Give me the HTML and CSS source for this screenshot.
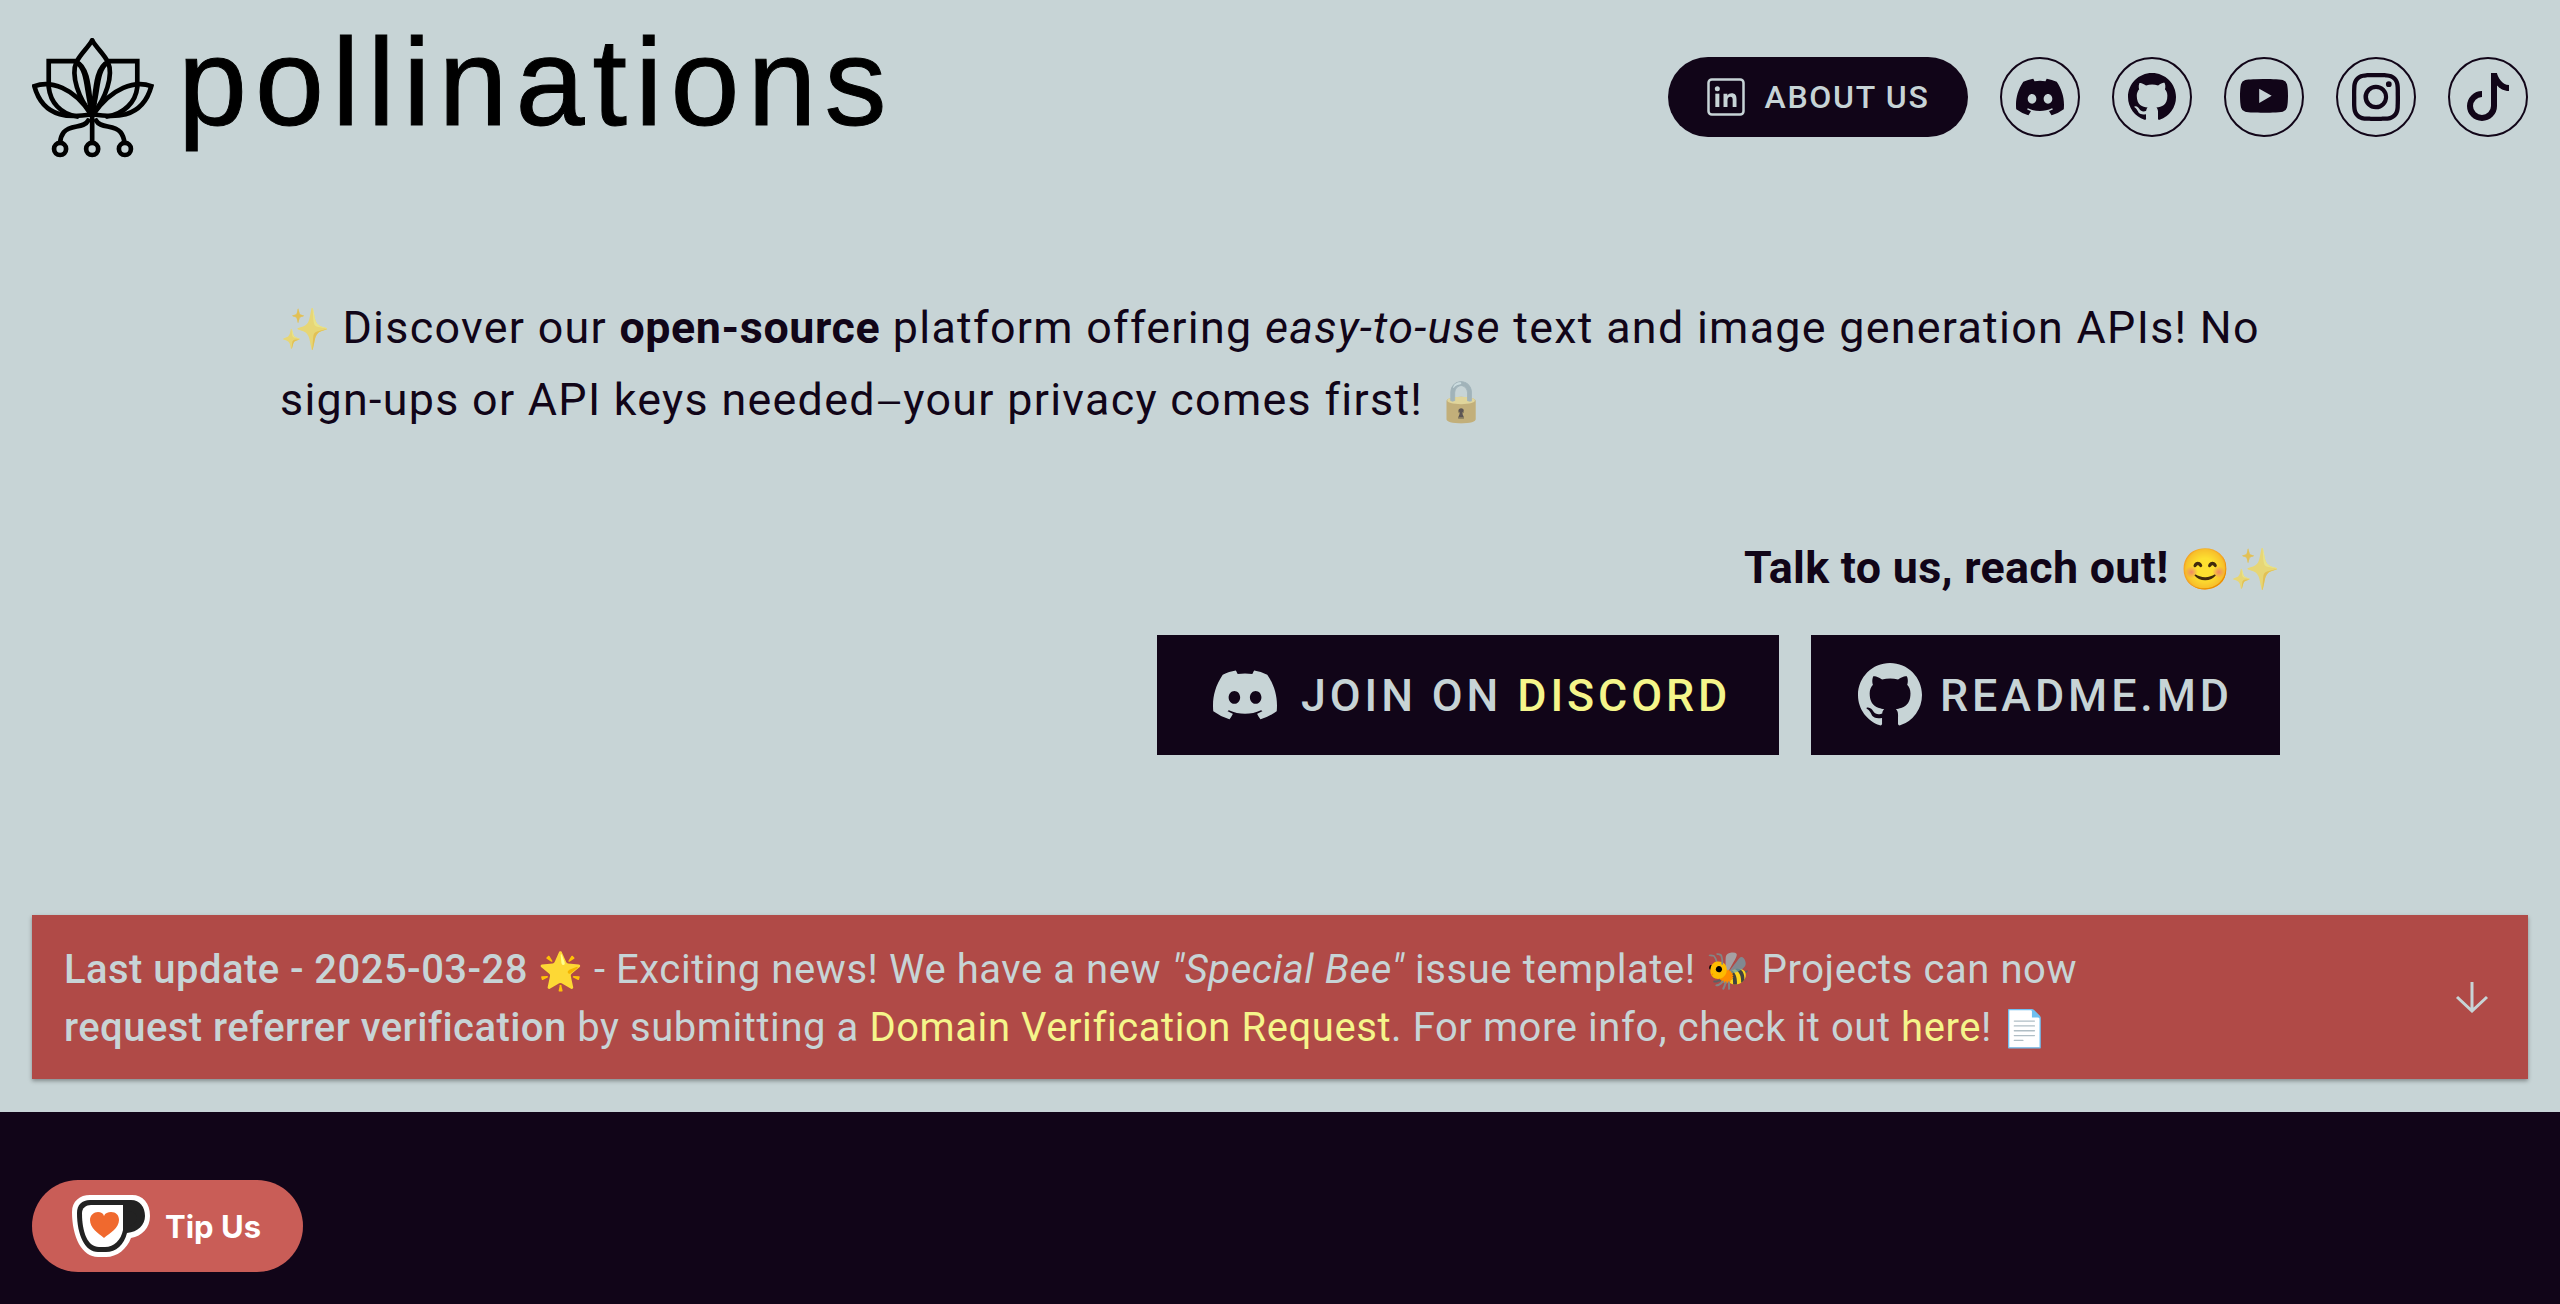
FILE: index.html
```html
<!DOCTYPE html>
<html lang="en">
<head>
<meta charset="utf-8">
<title>Pollinations</title>
<link rel="stylesheet" href="styles.css">
</head>
<body>
<svg class="defs" width="0" height="0" aria-hidden="true">
  <symbol id="i-discord" viewBox="0 0 16 16"><path d="M13.545 2.907a13.2 13.2 0 0 0-3.257-1.011.05.05 0 0 0-.052.025c-.141.25-.297.577-.406.833a12.2 12.2 0 0 0-3.658 0 8 8 0 0 0-.412-.833.05.05 0 0 0-.052-.025c-1.125.194-2.22.534-3.257 1.011a.04.04 0 0 0-.021.018C.356 6.024-.213 9.047.066 12.032q.003.022.021.037a13.3 13.3 0 0 0 3.995 2.02.05.05 0 0 0 .056-.019q.463-.63.818-1.329a.05.05 0 0 0-.01-.059l-.018-.011a9 9 0 0 1-1.248-.595.05.05 0 0 1-.02-.066l.015-.019q.127-.095.248-.195a.05.05 0 0 1 .051-.007c2.619 1.196 5.454 1.196 8.041 0a.05.05 0 0 1 .053.007q.121.1.248.195a.05.05 0 0 1-.004.085 8 8 0 0 1-1.249.594.05.05 0 0 0-.03.03.05.05 0 0 0 .003.041c.24.465.515.909.817 1.329a.05.05 0 0 0 .056.019 13.2 13.2 0 0 0 4.001-2.02.05.05 0 0 0 .021-.037c.334-3.451-.559-6.449-2.366-9.106a.03.03 0 0 0-.02-.019m-8.198 7.307c-.789 0-1.438-.724-1.438-1.612s.637-1.613 1.438-1.613c.807 0 1.45.73 1.438 1.613 0 .888-.637 1.612-1.438 1.612m5.316 0c-.788 0-1.438-.724-1.438-1.612s.637-1.613 1.438-1.613c.807 0 1.451.73 1.438 1.613 0 .888-.631 1.612-1.438 1.612"/></symbol>
  <symbol id="i-github" viewBox="0 0 16 16"><path d="M8 0C3.58 0 0 3.58 0 8c0 3.54 2.29 6.53 5.47 7.59.4.07.55-.17.55-.38 0-.19-.01-.82-.01-1.49-2.01.37-2.53-.49-2.69-.94-.09-.23-.48-.94-.82-1.13-.28-.15-.68-.52-.01-.53.63-.01 1.08.58 1.23.82.72 1.21 1.87.87 2.33.66.07-.52.28-.87.51-1.07-1.78-.2-3.64-.89-3.64-3.95 0-.87.31-1.59.82-2.15-.08-.2-.36-1.02.08-2.12 0 0 .67-.21 2.2.82.64-.18 1.32-.27 2-.27s1.36.09 2 .27c1.53-1.04 2.2-.82 2.2-.82.44 1.1.16 1.92.08 2.12.51.56.82 1.27.82 2.15 0 3.07-1.87 3.75-3.65 3.95.29.25.54.73.54 1.48 0 1.07-.01 1.93-.01 2.2 0 .21.15.46.55.38A8.01 8.01 0 0 0 16 8c0-4.42-3.58-8-8-8"/></symbol>
  <symbol id="i-youtube" viewBox="0 0 16 16"><path d="M8.051 1.999h.089c.822.003 4.987.033 6.11.335a2.01 2.01 0 0 1 1.415 1.42c.101.38.172.883.22 1.402l.01.104.022.26.008.104c.065.914.073 1.77.074 1.957v.075c-.001.194-.01 1.108-.082 2.06l-.008.105-.009.104c-.05.572-.124 1.14-.235 1.558a2.01 2.01 0 0 1-1.415 1.42c-1.16.312-5.569.334-6.18.335h-.142c-.309 0-1.587-.006-2.927-.052l-.17-.006-.087-.004-.171-.007-.171-.007c-1.11-.049-2.167-.128-2.654-.26a2.01 2.01 0 0 1-1.415-1.419c-.111-.417-.185-.986-.235-1.558L.09 9.82l-.008-.104A31 31 0 0 1 0 7.68v-.123c.002-.215.01-.958.064-1.778l.007-.103.003-.052.008-.104.022-.26.01-.104c.048-.519.119-1.023.22-1.402a2.01 2.01 0 0 1 1.415-1.42c.487-.13 1.544-.21 2.654-.26l.17-.007.172-.006.086-.003.171-.007A100 100 0 0 1 7.858 2zM6.4 5.209v4.818l4.157-2.408z"/></symbol>
  <symbol id="i-instagram" viewBox="0 0 16 16"><path d="M8 0C5.829 0 5.556.01 4.703.048 3.85.088 3.269.222 2.76.42a3.9 3.9 0 0 0-1.417.923A3.9 3.9 0 0 0 .42 2.76C.222 3.268.087 3.85.048 4.7.01 5.555 0 5.827 0 8.001c0 2.172.01 2.444.048 3.297.04.852.174 1.433.372 1.942.205.526.478.972.923 1.417.444.445.89.719 1.416.923.51.198 1.09.333 1.942.372C5.555 15.99 5.827 16 8 16s2.444-.01 3.298-.048c.851-.04 1.434-.174 1.943-.372a3.9 3.9 0 0 0 1.416-.923c.445-.445.718-.891.923-1.417.197-.509.332-1.09.372-1.942C15.99 10.445 16 10.173 16 8s-.01-2.445-.048-3.299c-.04-.851-.175-1.433-.372-1.941a3.9 3.9 0 0 0-.923-1.417A3.9 3.9 0 0 0 13.24.42c-.51-.198-1.092-.333-1.943-.372C10.443.01 10.172 0 7.998 0zm-.717 1.442h.718c2.136 0 2.389.007 3.232.046.78.035 1.204.166 1.486.275.373.145.64.319.92.599s.453.546.598.92c.11.281.24.705.275 1.485.039.843.047 1.096.047 3.231s-.008 2.389-.047 3.232c-.035.78-.166 1.203-.275 1.485a2.5 2.5 0 0 1-.599.919c-.28.28-.546.453-.92.598-.28.11-.704.24-1.485.276-.843.038-1.096.047-3.232.047s-2.39-.009-3.233-.047c-.78-.036-1.203-.166-1.485-.276a2.5 2.5 0 0 1-.92-.598 2.5 2.5 0 0 1-.6-.92c-.109-.281-.24-.705-.275-1.485-.038-.843-.046-1.096-.046-3.233s.008-2.388.046-3.231c.036-.78.166-1.204.276-1.486.145-.373.319-.64.599-.92s.546-.453.92-.598c.282-.11.705-.24 1.485-.276.738-.034 1.024-.044 2.515-.045zm4.988 1.328a.96.96 0 1 0 0 1.92.96.96 0 0 0 0-1.92m-4.27 1.122a4.109 4.109 0 1 0 0 8.217 4.109 4.109 0 0 0 0-8.217m0 1.441a2.667 2.667 0 1 1 0 5.334 2.667 2.667 0 0 1 0-5.334"/></symbol>
  <symbol id="i-tiktok" viewBox="0 0 16 16"><path d="M9 0h1.98c.144.715.54 1.617 1.235 2.512C12.895 3.389 13.797 4 15 4v2c-1.753 0-3.07-.814-4-1.829V11a5 5 0 1 1-5-5v2a3 3 0 1 0 3 3z"/></symbol>
</svg>

<header class="top">
  <a class="brand">
    <svg class="lotus" viewBox="35 50 365 365" fill="none" stroke="#000" stroke-width="14" stroke-linejoin="miter" stroke-linecap="round">
      <path d="M215 60C200 85 180 100 168 125C150 165 175 235 213 280"/>
      <path d="M215 60C230 85 250 100 262 125C280 165 255 235 217 280"/>
      <path d="M213 270C205 215 205 140 168 125M217 270C225 215 225 140 262 125" />
      <path d="M213 280C235 220 225 150 262 125M217 280C195 220 205 150 168 125" />
      <path d="M165 122H85V200C90 245 120 280 170 288M265 122H350V200C345 245 310 280 260 288"/>
      <path d="M42 197C90 180 160 200 212 282C160 290 70 300 42 197Z"/>
      <path d="M392 197C344 180 274 200 218 282C274 290 364 300 392 197Z"/>
      <path d="M215 285V366"/>
      <path d="M203 300C190 325 150 310 130 335C122 345 120 355 119 366"/>
      <path d="M227 300C240 325 280 310 300 335C308 345 310 355 312 366"/>
      <circle cx="119" cy="385" r="18"/><circle cx="215" cy="385" r="18"/><circle cx="313" cy="385" r="18"/>
      <path d="M205 250H225L215 295Z" fill="#000" stroke-width="6"/>
    </svg>
    <span class="wordmark">pollinations</span>
  </a>
  <nav class="social">
    <a class="about">
      <svg class="in" viewBox="0 0 24 24" fill="none"><rect x="1.5" y="1.5" width="21" height="21" rx="2" stroke="currentColor" stroke-width="1.5"/><rect x="5.6" y="10" width="2.4" height="8" fill="currentColor"/><circle cx="6.8" cy="7" r="1.5" fill="currentColor"/><path d="M10.5 18v-8h2.3v1.2c.6-1 1.6-1.4 2.6-1.4 2 0 2.9 1.3 2.9 3.4V18H16v-4.3c0-1.2-.4-1.9-1.4-1.9-1.1 0-1.7.8-1.7 2V18z" fill="currentColor"/></svg>
      <span>ABOUT US</span>
    </a>
    <a class="round"><svg><use href="#i-discord"/></svg></a>
    <a class="round"><svg><use href="#i-github"/></svg></a>
    <a class="round"><svg><use href="#i-youtube"/></svg></a>
    <a class="round"><svg><use href="#i-instagram"/></svg></a>
    <a class="round"><svg><use href="#i-tiktok"/></svg></a>
  </nav>
</header>

<main class="content">
  <p class="intro"><span class="emo pale">✨</span> Discover our <strong>open-source</strong> platform offering <em>easy-to-use</em> text and image generation APIs! No sign-ups or API keys needed<span class="dash">—</span>your privacy comes first! <span class="emo muted">🔒</span></p>
  <div class="reach">
    <p class="reach-title">Talk to us, reach out! <span class="emo">😊</span><span class="emo pale">✨</span></p>
    <div class="reach-buttons">
      <a class="cta cta-d"><svg class="cta-icon"><use href="#i-discord"/></svg><span>JOIN ON <b>DISCORD</b></span></a>
      <a class="cta cta-g"><svg class="cta-icon"><use href="#i-github"/></svg><span>README.MD</span></a>
    </div>
  </div>
</main>

<section class="notice">
  <p><strong>Last update - 2025-03-28</strong> <span class="emo">🌟</span> - Exciting news! We have a new <em>"Special Bee"</em> issue template! <span class="emo">🐝</span> Projects can now<br>
  <strong>request referrer verification</strong> by submitting a <a>Domain Verification Request</a>. For more info, check it out <a>here</a>! <span class="emo">📄</span></p>
  <svg class="arrow" viewBox="0 0 34 31" fill="none" stroke="currentColor" stroke-width="3"><path d="M17 0V29M2 15L17 29L32 15"/></svg>
</section>

<footer class="foot">
  <a class="tip">
    <svg class="cup" viewBox="0 0 78 62">
      <path d="M0 17C0 6 8 0 18 0H60C71 0 78 8 78 21C78 33 70 41 59 43C55 54 45 62 34 62H26C10 62 0 42 0 17Z" fill="#fff"/>
      <path d="M5 18C5 10 10 5 18 5H59C68 5 73 12 73 21C73 30 66 37 55 38C52 50 44 57 34 57H26C13 57 5 40 5 18Z" fill="#222"/>
      <path d="M10 18C10 13 14 10 19 10H51V35C49 45 42 52 33 52H27C16 52 10 38 10 18Z" fill="#fff"/>
      <path d="M54 16C61 16 65 19 65 23C65 27 61 31 54 31Z" fill="#222"/>
      <path d="M32 43C26 38 18 33 18 25C18 20 22 17 26 17C29 17 31 18 32 21C33 18 36 17 39 17C44 17 47 20 47 25C47 33 38 38 32 43Z" fill="#f0692e"/>
    </svg>
    <span>Tip Us</span>
  </a>
</footer>
</body>
</html>
```
FILE: styles.css
```css
* { box-sizing: border-box; }
html, body { margin: 0; padding: 0; }
body {
  background: #c7d4d6;
  color: #110518;
  font-family: "Roboto", "Noto Sans", sans-serif;
  height: 1304px;
  overflow: hidden;
  display: flex;
  flex-direction: column;
}
.defs { position: absolute; }
.emo { font-size: .9em; letter-spacing: 0; line-height: 0; }
.pale { opacity: .6; }
.muted { filter: saturate(.45); opacity: .8; }
.dash { font-size: .75em; line-height: 0; }
.top {
  height: 160px;
  display: flex;
  justify-content: space-between;
  align-items: flex-start;
  padding: 0 32px;
}
.brand { display: flex; align-items: flex-start; color: #000; }
.lotus { width: 122px; height: 122px; margin-top: 37px; flex: none; }
.wordmark {
  font-family: "Liberation Sans", sans-serif;
  font-size: 124px;
  line-height: 142px;
  letter-spacing: 8px;
  margin-left: 24px;
  margin-top: 11px;
  -webkit-text-stroke: 1px #000;
}
.social { display: flex; gap: 32px; margin-top: 57px; }
.about {
  width: 300px;
  height: 80px;
  border-radius: 40px;
  background: #110518;
  color: #c7d4d6;
  display: flex;
  align-items: center;
  justify-content: center;
  gap: 18px;
  font-size: 32px;
  font-weight: 500;
  letter-spacing: 1.7px;
}
.in { width: 40px; height: 40px; flex: none; }
.round {
  width: 80px;
  height: 80px;
  border-radius: 50%;
  border: 2px solid #110518;
  display: flex;
  align-items: center;
  justify-content: center;
  fill: #110518;
}
.round svg { width: 48px; height: 48px; }
.content { width: 2000px; margin: 132px auto 0; }
.intro {
  margin: 0;
  font-size: 44.8px;
  line-height: 72px;
  letter-spacing: 1.3px;
}
.intro strong { font-weight: 700; letter-spacing: .6px; }
.reach { display: flex; flex-direction: column; align-items: flex-end; margin-top: 96px; }
.reach-title { margin: 0; font-size: 44.8px; line-height: 72px; font-weight: 700; letter-spacing: .3px; }
.reach-buttons { display: flex; gap: 32px; margin-top: 31px; }
.cta {
  height: 120px;
  background: #110518;
  color: #c7d4d6;
  display: flex;
  align-items: center;
  font-size: 44.8px;
  letter-spacing: 3.9px;
  font-weight: 500;
  fill: #c7d4d6;
}
.cta b { color: #f5f58a; font-weight: 500; }
.cta-icon { width: 64px; height: 64px; flex: none; }
.cta-d { width: 622px; padding-left: 56px; gap: 24px; }
.cta-g { width: 469px; padding-left: 47px; gap: 18px; }
.notice {
  margin: 160px 32px 0;
  height: 164px;
  padding: 0 32px;
  background: #b04a47;
  color: #c7d4d6;
  box-shadow: 0 2px 4px rgba(0,0,0,.35);
  display: flex;
  align-items: center;
  justify-content: space-between;
}
.notice p { margin: 4px 0 0; font-size: 40px; line-height: 58px; letter-spacing: .57px; }
.notice strong { font-weight: 500; letter-spacing: .45px; }
.notice a { color: #f5f58a; }
.arrow { width: 34px; height: 31px; flex: none; margin-right: 7px; }
.foot {
  margin-top: 33px;
  flex: 1;
  background: #110518;
  padding: 68px 32px 0;
}
.tip {
  width: 271px;
  height: 92px;
  border-radius: 46px;
  background: #c95d57;
  color: #fff;
  display: flex;
  align-items: center;
  padding-left: 40px;
  gap: 15px;
  font-family: "Inter", sans-serif;
  font-size: 31px;
  font-weight: 700;
}
.cup { width: 78px; height: 62px; flex: none; }
```
